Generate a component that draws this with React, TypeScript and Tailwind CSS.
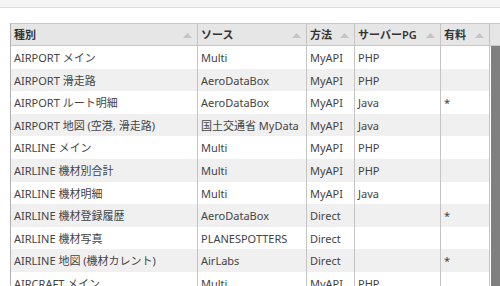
const columns = [
  { label: "種別", w: "w-[187px]" },
  { label: "ソース", w: "w-[109px]" },
  { label: "方法", w: "w-[48px]" },
  { label: "サーバーPG", w: "w-[86px]" },
  { label: "有料", w: "w-[49px]" },
];

const rows = [
  ["AIRPORT メイン", "Multi", "MyAPI", "PHP", ""],
  ["AIRPORT 滑走路", "AeroDataBox", "MyAPI", "PHP", ""],
  ["AIRPORT ルート明細", "AeroDataBox", "MyAPI", "Java", "*"],
  ["AIRPORT 地図 (空港, 滑走路)", "国土交通省 MyData", "MyAPI", "Java", ""],
  ["AIRLINE メイン", "Multi", "MyAPI", "PHP", ""],
  ["AIRLINE 機材別合計", "Multi", "MyAPI", "PHP", ""],
  ["AIRLINE 機材明細", "Multi", "MyAPI", "Java", ""],
  ["AIRLINE 機材登録履歴", "AeroDataBox", "Direct", "", "*"],
  ["AIRLINE 機材写真", "PLANESPOTTERS", "Direct", "", ""],
  ["AIRLINE 地図 (機材カレント)", "AirLabs", "Direct", "", "*"],
  ["AIRCRAFT メイン", "Multi", "MyAPI", "PHP", ""],
];

const SortArrow = () => (
  <svg width="9" height="5" viewBox="0 0 9 5" className="shrink-0">
    <path d="M0 5 L4.5 0 L9 5 Z" fill="#c4c4c4" />
  </svg>
);

const App = () => {
  return (
    <div
      className="w-[500px] h-[286px] overflow-hidden bg-white text-[11px]"
      style={{ fontFamily: '"Noto Sans", "Noto Sans CJK JP", sans-serif' }}
    >
      <div className="h-[8px] bg-[#f5f5f5] border-b border-[#dcdcdc]" />

      <div className="mt-[15px] ml-[10px]">
        {/* header */}
        <div className="flex h-[23px] bg-[#e6e6e6] border-y border-[#c8c8c8] border-l border-l-[#b0b0b0]">
          {columns.map((c) => (
            <div
              key={c.label}
              className={`${c.w} flex items-center justify-between pl-[3px] pr-[5px] pt-[1px] border-r border-[#c4c4c4] font-semibold text-[#333]`}
            >
              <span>{c.label}</span>
              <SortArrow />
            </div>
          ))}
          <div className="flex-1" />
        </div>

        {/* body */}
        <div className="flex">
          <div className="border-l border-[#b0b0b0]">
            {rows.map((r, i) => (
              <div
                key={i}
                className={`flex h-[22.6px] ${i % 2 === 1 ? "bg-[#f0f0f0]" : "bg-white"}`}
              >
                {columns.map((c, j) => (
                  <div
                    key={j}
                    className={`${c.w} flex items-center pl-[3px] pt-[2px] border-r border-[#c4c4c4] text-[#444] whitespace-nowrap overflow-hidden`}
                  >
                    {r[j]}
                  </div>
                ))}
              </div>
            ))}
          </div>
          <div className="flex-1 bg-[#808080] ml-[1px]" />
        </div>
      </div>
    </div>
  );
};

export default App;
